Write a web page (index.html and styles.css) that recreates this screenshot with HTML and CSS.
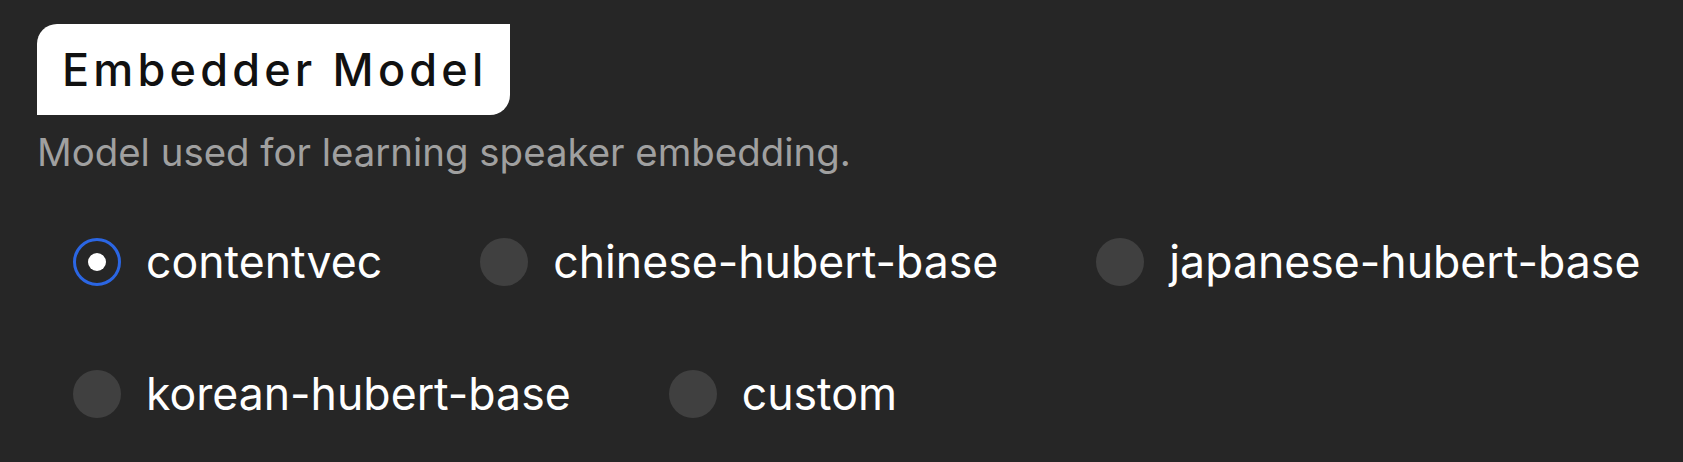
FILE: index.html
```html
<!DOCTYPE html>
<html lang="en">
<head>
  <meta charset="UTF-8">
  <title>Embedder Model</title>
  <link rel="stylesheet" href="styles.css">
</head>
<body>
  <div class="block">
    <span class="label">Embedder Model</span>
    <p class="info">Model used for learning speaker embedding.</p>

    <div class="choices">
      <label class="choice">
        <span class="dot checked"></span>
        <span>contentvec</span>
      </label>
      <label class="choice">
        <span class="dot"></span>
        <span>chinese-hubert-base</span>
      </label>
      <label class="choice">
        <span class="dot"></span>
        <span>japanese-hubert-base</span>
      </label>
      <label class="choice">
        <span class="dot"></span>
        <span>korean-hubert-base</span>
      </label>
      <label class="choice">
        <span class="dot"></span>
        <span>custom</span>
      </label>
    </div>
  </div>
</body>
</html>
```

FILE: styles.css
```css
body {
  margin: 0;
  background: #262626;
  font-family: Inter, "Noto Sans", sans-serif;
  height: 100vh;
}

.block {
  padding: 24px 10px 0 37px;
}

.label {
  display: inline-block;
  background: white;
  color: #111;
  font-weight: 500;
  font-size: 45px;
  letter-spacing: 4.2px;
  line-height: 91px;
  padding: 0 23px 0 25px;
  border-radius: 20px 0 20px 0;
}

.info {
  margin: 11px 0 0;
  color: #a0a0a0;
  font-size: 38.4px;
  line-height: 52px;
}

.choices {
  display: flex;
  flex-wrap: wrap;
  column-gap: 98px;
  row-gap: 84px;
  padding: 60px 0 0 36px;
}

.choice {
  display: flex;
  align-items: center;
  gap: 25px;
  color: white;
  font-size: 44.6px;
  height: 48px;
}

.dot {
  width: 48px;
  height: 48px;
  border-radius: 50%;
  background: #404040;
  box-sizing: border-box;
}

.dot.checked {
  background: #262626;
  border: 3px solid #2b66e3;
  position: relative;
}

.dot.checked::after {
  content: "";
  position: absolute;
  left: 12px;
  top: 12px;
  width: 18px;
  height: 18px;
  border-radius: 50%;
  background: white;
}
```
